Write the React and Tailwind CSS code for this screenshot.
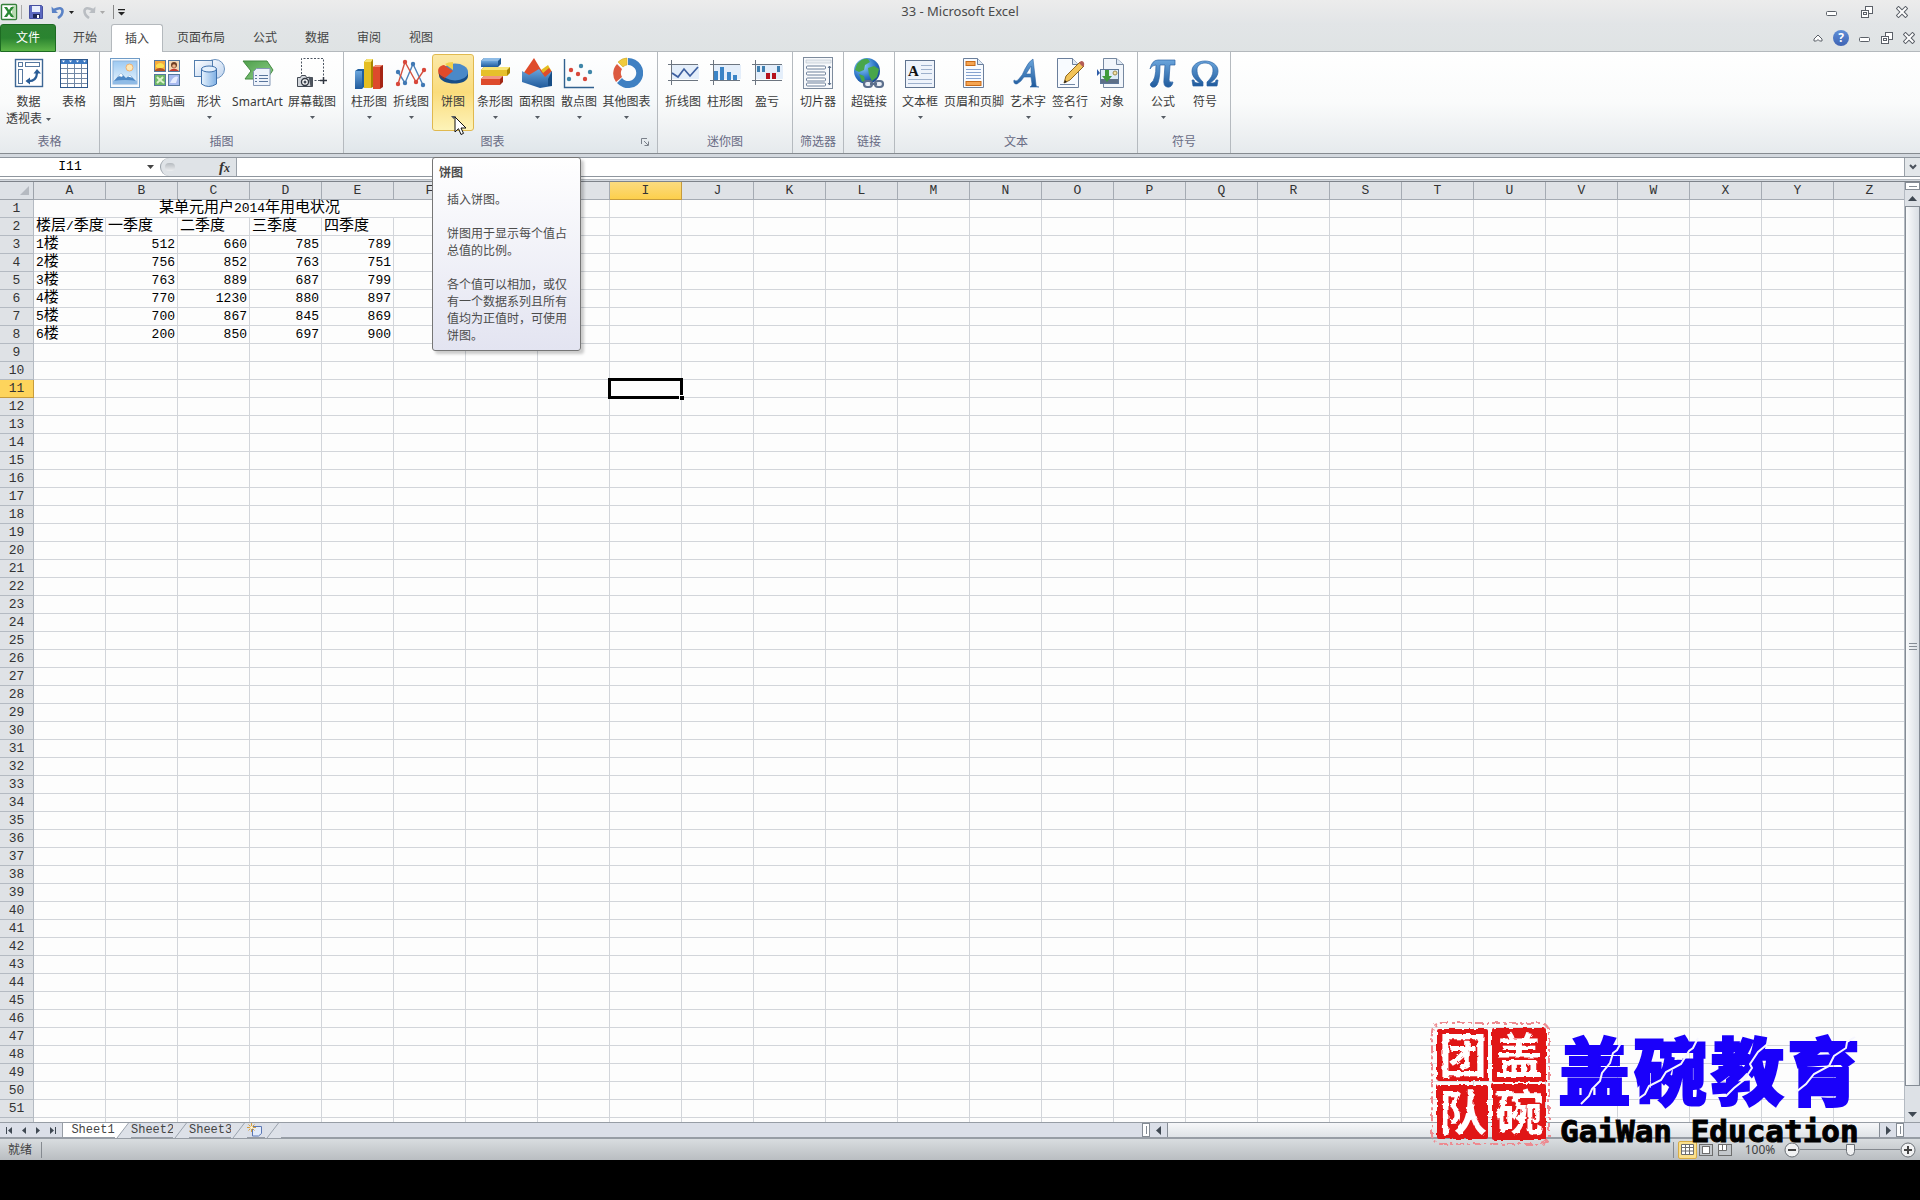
import React from "react";

const UI = "font-['Noto_Sans','Noto_Sans_CJK_SC',sans-serif]";
const MONO = "font-['Liberation_Mono','Noto_Sans_CJK_SC',monospace]";

const Svg = ({ children, className = "size-8" }) => (
  <svg viewBox="0 0 32 32" className={className} fill="none" aria-hidden="true">
    {children}
  </svg>
);

const Defs = () => (
  <svg className="absolute size-0" aria-hidden="true">
    <defs>
      <linearGradient id="blue" x1="0" y1="0" x2="0" y2="1">
        <stop offset="0" stopColor="#6aa5dc" />
        <stop offset="1" stopColor="#1f5a9c" />
      </linearGradient>
      <linearGradient id="pale" x1="0" y1="0" x2="1" y2="1">
        <stop offset="0" stopColor="#ffffff" />
        <stop offset="1" stopColor="#bcd2ee" />
      </linearGradient>
      <linearGradient id="sky" x1="0" y1="0" x2="0" y2="1">
        <stop offset="0" stopColor="#9cc9f2" />
        <stop offset="1" stopColor="#eaf5fd" />
      </linearGradient>
      <linearGradient id="can" x1="0" y1="0" x2="1" y2="0">
        <stop offset="0" stopColor="#e6f2fd" />
        <stop offset="1" stopColor="#7fb0e4" />
      </linearGradient>
      <linearGradient id="green" x1="0" y1="0" x2="1" y2="1">
        <stop offset="0" stopColor="#4f9f4c" />
        <stop offset="1" stopColor="#8ccf86" />
      </linearGradient>
      <radialGradient id="globe" cx="0.35" cy="0.3" r="0.8">
        <stop offset="0" stopColor="#8fd0fb" />
        <stop offset="0.6" stopColor="#2a72c4" />
        <stop offset="1" stopColor="#143f84" />
      </radialGradient>
    </defs>
  </svg>
);

const icons = {
  pivot: (
    <Svg>
      <rect x="2.5" y="2.5" width="27" height="27" fill="#fff" stroke="#3d6795" strokeWidth="1.4" />
      <rect x="5.500" y="5.500" width="4" height="4" stroke="#56789f" />
      <rect x="12.500" y="5.500" width="14" height="4" stroke="#56789f" />
      <rect x="5.500" y="12.500" width="4" height="14" stroke="#56789f" />
      <path d="M14 24c7 1 10-3 10-9" stroke="#2b5d96" strokeWidth="2.200" />
      <path d="M20.500 16.500L24 12l4 4.500z M17 20.500L12.500 24l4.500 3.500z" fill="#2b5d96" />
    </Svg>
  ),
  table: (
    <Svg>
      <rect x="2" y="2" width="28" height="29" fill="#fff" />
      <rect x="2" y="2" width="28" height="5" fill="#3c79c2" />
      <path d="M4 3.500h3l-1.500 2zM11 3.500h3l-1.500 2zM18 3.500h3l-1.500 2zM25 3.500h3l-1.500 2z" fill="#fff" />
      <path d="M2.500 11.500h27M2.500 16.500h27M2.500 21.500h27M2.500 26.500h27M9.500 7v24M16.500 7v24M23.500 7v24" stroke="#7188a5" />
      <rect x="2.500" y="2.500" width="27" height="28" stroke="#2d568a" />
    </Svg>
  ),
  picture: (
    <Svg>
      <rect x="1.500" y="1.500" width="29" height="29" fill="#f6fbff" stroke="#6f9bc6" />
      <rect x="4" y="4" width="24" height="23" fill="url(#sky)" stroke="#8fb4da" />
      <circle cx="20.500" cy="10.500" r="3.500" fill="#fde9b8" stroke="#f0b070" />
      <path d="M4 25l8-9 5 5 4-3 7 7v2H4z" fill="#4c87c5" />
      <path d="M12 16l-3 4 2-1 1 1 2-1zM21 18l-2 2 2 0 2 1z" fill="#fff" />
      <path d="M4 24q12-2 24 0v3H4z" fill="#8fbbe6" />
    </Svg>
  ),
  clipart: (
    <Svg>
      <rect x="3.500" y="3.500" width="11" height="11" fill="#f7a93b" stroke="#55779e" />
      <path d="M5 8q5-4 8 0v2q-4 3-8 0z" fill="#fce052" />
      <path d="M4 13q5-4 10 0v1H4z" fill="#b34f22" />
      <rect x="17.500" y="3.500" width="11" height="11" fill="#f3d9b6" stroke="#55779e" />
      <circle cx="23" cy="8" r="3" fill="#6d3d22" />
      <circle cx="23" cy="9" r="1.800" fill="#f1b587" />
      <path d="M18 14q5-5 10 0z" fill="#c5392e" />
      <rect x="3.500" y="17.500" width="11" height="11" fill="#6fb868" stroke="#55779e" />
      <path d="M6 20l3 3 3-3M6 26l3-3 4 3" stroke="#dcf3c9" strokeWidth="2" />
      <rect x="17.500" y="17.500" width="11" height="11" fill="#a7b9ef" stroke="#55779e" />
      <path d="M19 26q4-8 8-6l-2 6z" fill="#e7edff" />
    </Svg>
  ),
  shapes: (
    <Svg>
      <circle cx="22" cy="12" r="9.500" fill="url(#pale)" stroke="#6c93bf" />
      <rect x="1.500" y="3.500" width="18" height="16" fill="url(#pale)" stroke="#557fae" />
      <path d="M8.500 12v15q7 5 15 0V12z" fill="url(#can)" stroke="#3e70ab" />
      <ellipse cx="16" cy="12" rx="7.500" ry="3" fill="#e4f0fc" stroke="#3e70ab" />
    </Svg>
  ),
  smartart: (
    <Svg>
      <path d="M1 4h24l6 9-6 9H3l6-8z" fill="url(#green)" stroke="#438a40" />
      <path d="M11.500 14.500l3-3h13.500v17H11.500z" fill="#eef3fb" stroke="#8497b5" />
      <path d="M13 18.500h2M17 18.500h9M13 21.500h2M17 21.500h9M13 24.500h2M17 24.500h9" stroke="#59759c" />
    </Svg>
  ),
  screenshot: (
    <Svg>
      <path d="M5.500 17V1.500h22V23.500H18" stroke="#4c5561" strokeDasharray="2 1.500" />
      <path d="M24 23.500h7M27.500 20v7" stroke="#303640" strokeWidth="1.500" />
      <path d="M1.500 20.500h3l1-2h4l1 2h6v9h-15z" fill="#d3d7dc" stroke="#444b55" />
      <circle cx="9" cy="25" r="3.500" fill="#fff" stroke="#333a44" strokeWidth="1.400" />
      <circle cx="9" cy="25" r="1.500" fill="#454c58" />
      <path d="M12.500 19.500l4 1v9l-2 0z" fill="#4d545e" />
    </Svg>
  ),
  column: (
    <Svg>
      <path d="M2 14l3-2h6v18l-2 2H2z" fill="#1f5f9f" />
      <path d="M2 14h7v18H2z" fill="url(#blue)" />
      <path d="M11 5l3-3h6v28l-2 1h-7z" fill="#a58500" />
      <path d="M11 5h7v26h-7z" fill="#e5be22" />
      <path d="M11 5l3-3h6l-2 3z" fill="#f8e36f" />
      <path d="M20 10l3-2h7v22l-3 2h-7z" fill="#a52414" />
      <path d="M20 10h7v22h-7z" fill="#dd4a2c" />
      <path d="M20 10l3-2h7l-3 2z" fill="#f19078" />
    </Svg>
  ),
  line: (
    <Svg>
      <path d="M3 15l7 11 8-19 10 21" stroke="#4c81b8" strokeWidth="1.400" />
      <path d="M3 27l7-22 11 20 8-12" stroke="#d4513f" strokeWidth="1.400" />
      {[[3, 27], [10, 5], [21, 25], [29, 13]].map(([x, y]) => (
        <circle key={`${x}-${y}`} cx={x} cy={y} r="2.200" fill="#d8473a" />
      ))}
      {[[3, 15], [10, 26], [18, 7], [28, 28]].map(([x, y]) => (
        <circle key={`${x}-${y}`} cx={x} cy={y} r="2.200" fill="#3f78b4" />
      ))}
    </Svg>
  ),
  pie: (
    <Svg>
      <path d="M2 15v4c2 10 29 10 29 0v-4z" fill="#174d86" />
      <ellipse cx="18" cy="15" rx="13" ry="8.500" fill="#4a89c8" />
      <path d="M16 14L8 21C-2 17 0 9 7 8z" fill="#e04a2a" />
      <path d="M1 14c0 4 3 7 7 8v-1c-4-1-6-3-7-7z" fill="#a12a14" />
      <path d="M16 13L8 7q3-2 8-2z" fill="#f2d04a" />
    </Svg>
  ),
  bar: (
    <Svg>
      <path d="M2 4l3-3h17v6l-3 3H2z" fill="#1f5790" />
      <path d="M2 4h17v6H2z" fill="url(#blue)" />
      <path d="M2 4l3-3h17l-3 3z" fill="#8dbbe6" />
      <path d="M2 13l3-3h26v6l-3 3H2z" fill="#a88500" />
      <path d="M2 13h26v6H2z" fill="#e6c02b" />
      <path d="M2 13l3-3h26l-3 3z" fill="#f8e578" />
      <path d="M2 22l3-3h19v6l-3 3H2z" fill="#a22815" />
      <path d="M2 22h19v6H2z" fill="#de4b2c" />
      <path d="M2 22l3-3h19l-3 3z" fill="#f29780" />
    </Svg>
  ),
  area: (
    <Svg>
      <path d="M20 13l7-5 4 7v11l-8-2z" fill="#e5bd20" />
      <path d="M2 17L13 1l9 15 6-5 3 4v12H10z" fill="#df4c2c" />
      <path d="M1 14l7 4 10-6 6 8 7-6v15l-12 2L1 25z" fill="url(#blue)" />
      <path d="M27 22l4-8v15l-4 0z" fill="#174d86" />
    </Svg>
  ),
  scatter: (
    <Svg>
      <path d="M1.500 2v28.500H31" stroke="#31618f" strokeWidth="1.400" />
      {[[8, 13], [15, 17], [22, 22]].map(([x, y]) => (
        <circle key={x} cx={x} cy={y} r="2.200" fill="#d8473a" />
      ))}
      {[[18, 9], [6, 22], [27, 15]].map(([x, y]) => (
        <circle key={x} cx={x} cy={y} r="2.200" fill="#3f86a8" />
      ))}
    </Svg>
  ),
  donut: (
    <Svg>
      <path d="M17 1a15 15 0 1 1-11 25l5-5a8 8 0 1 0 6-13z" fill="#3f80c2" />
      <path d="M5 25a14 14 0 0 1 1-18l5 5a8 8 0 0 0 0 8z" fill="#dc5a40" />
      <path d="M7 5q4-4 9-4v7q-2 0-4 2z" fill="#f0cb3c" stroke="#c79d1b" strokeWidth="0.500" />
    </Svg>
  ),
  sparkLine: (
    <Svg>
      <path d="M4 8h28v14H4z" fill="#e4eefa" />
      <path d="M1 7.500h30M1 23.500h30M4.500 3v25" stroke="#6c7580" />
      <path d="M5 16l6 4 6-8 6 7 8-9" stroke="#3d5fa0" strokeWidth="1.700" />
    </Svg>
  ),
  sparkColumn: (
    <Svg>
      <path d="M4 8h28v14H4z" fill="#e4eefa" />
      <path d="M1 7.500h30M1 23.500h30M4.500 3v25" stroke="#6c7580" />
      <path d="M5 14h4v9H5zM11 10h4v13h-4zM18 15h4v8h-4zM24 18h4v5h-4z" fill="#3b84c6" />
    </Svg>
  ),
  winLoss: (
    <Svg>
      <path d="M4 8h28v14H4z" fill="#e4eefa" />
      <path d="M1 7.500h30M1 23.500h30M4.500 3v25" stroke="#6c7580" />
      <path d="M6 9h3v6H6zM11 9h3v6h-3zM26 9h3v6h-3z" fill="#3f7fb0" />
      <path d="M15 16h4v6h-4zM21 16h4v6h-4z" fill="#b5121d" />
    </Svg>
  ),
  slicer: (
    <Svg>
      <rect x="1.500" y="0.500" width="29" height="31" fill="#f7f9fc" stroke="#7d8b9d" />
      <path d="M4 3h25v3H4z" fill="#eceff3" stroke="#aab4c0" strokeWidth="0.500" />
      {[9, 15, 21, 26].map((y) => (
        <rect key={y} x="4.500" y={y} width="19" height="3" rx="1" fill="#fff" stroke="#6d809b" />
      ))}
      <path d="M27.500 9v19M26 11l1.500-2 1.500 2M26 26l1.500 2 1.500-2" stroke="#596d88" />
    </Svg>
  ),
  link: (
    <Svg>
      <circle cx="14" cy="14" r="13" fill="url(#globe)" />
      <path d="M4 7q5-6 11-5l2 3-5 3-1 5-5 2-4-2zM15 11l6-2 5 3-2 8-5 4-3-6zM6 17l5 2 1 5-3 1z" fill="#48a64a" />
      <g stroke="#5c6f8c" strokeWidth="2.200" fill="none">
        <rect x="11" y="24" width="8" height="6" rx="3" fill="#e8edf5" />
        <rect x="22" y="24" width="8" height="6" rx="3" fill="#e8edf5" />
        <path d="M17 27h7" />
      </g>
    </Svg>
  ),
  textbox: (
    <Svg>
      <rect x="1.500" y="3.500" width="29" height="27" fill="#eef3fb" stroke="#60738f" />
      <text x="4" y="19" fontSize="15" fontFamily="Liberation Serif" fontWeight="bold" fill="#111">A</text>
      <path d="M17 8.500h11M17 12.500h11M17 16.500h11M4 22.500h24M4 26.500h24" stroke="#9db0cc" />
    </Svg>
  ),
  header: (
    <Svg>
      <path d="M5.500 1.500h14l6 6v23h-20z" fill="#f8fbff" stroke="#6b7f9c" />
      <path d="M19.500 1.500v6h6" fill="#dfe9f5" stroke="#6b7f9c" />
      <rect x="8" y="4.500" width="9" height="4" fill="#f5a552" stroke="#c76a18" />
      <rect x="8" y="24.500" width="15" height="4" fill="#f5a552" stroke="#c76a18" />
      <path d="M8 12.500h15M8 15.500h15M8 18.500h15M8 21.500h15" stroke="#86a3cf" />
    </Svg>
  ),
  wordart: (
    <Svg>
      <path d="M21 2l3 26q0 2 3 2h-9q2-1 2-3l-1-7h-7q-3 5-7 7-4 0-3-4 2 2 4 0 5-5 7-11 4-8 8-10zM19 9l-5 8h5z" fill="url(#blue)" stroke="#2e64a5" strokeWidth="0.600" />
    </Svg>
  ),
  signature: (
    <Svg>
      <path d="M3.500 1.500h15l6 6v23h-21z" fill="#f8fbff" stroke="#6b7f9c" />
      <path d="M18.500 1.500v6h6" fill="#dfe9f5" stroke="#6b7f9c" />
      <path d="M6 27.500h15" stroke="#7187a5" />
      <path d="M10 26l2-7L26 5l4 4-14 14z" fill="#f2c45a" stroke="#8c6620" />
      <path d="M25 6l2-2q4 0 3 5l-1 1z" fill="#b45d56" />
      <path d="M10 26l1-3 2 2z" fill="#222" />
    </Svg>
  ),
  object: (
    <Svg>
      <path d="M7.500 1.500h13l7 6v23h-20z" fill="#f2f6fb" stroke="#7688a0" />
      <path d="M20.500 1.500v6h7" fill="#dfe9f5" stroke="#7688a0" />
      <rect x="4.500" y="12.500" width="18" height="14" fill="#dcebf8" stroke="#5d7698" />
      <path d="M5 22h17v4H5z" fill="#5d6f87" />
      <path d="M9 13h4v6h3l-5 6-5-6h3z" fill="#3e9b3d" />
      <circle cx="19" cy="16" r="2" fill="#f4e2a6" stroke="#9a8a50" />
      <path d="M1 12l3 4-3 3z" fill="#2d5ca8" />
    </Svg>
  ),
  pi: (
    <Svg>
      <path d="M3 12Q5 3 11 3h17v5h-5l-1 15q0 3 4 2-1 6-6 5-4-1-3-8l1-14h-5q0 15-3 20-2 3-5 2-3-2-1-4 5-3 5-18-4 0-6 4z" fill="url(#blue)" stroke="#2b63a5" strokeWidth="0.700" />
    </Svg>
  ),
  omega: (
    <Svg>
      <path d="M3 23h2q0 3 3 3h3C5 22 3 18 3 14 3 8 9 4 16 4s13 4 13 10c0 4-2 8-8 12h3q3 0 3-3h2l-1 6H18v-4c4-4 6-7 6-12 0-4-3-7-8-7s-8 3-8 7c0 5 2 8 6 12v4H4z" fill="url(#blue)" stroke="#2b63a5" strokeWidth="0.700" />
    </Svg>
  ),
};

const GROUPS = [
  {
    name: "表格",
    items: [
      { icon: "pivot", label: "数据", second: "透视表", w: "w-[49px]" },
      { icon: "table", label: "表格" },
    ],
  },
  {
    name: "插图",
    items: [
      { icon: "picture", label: "图片" },
      { icon: "clipart", label: "剪贴画" },
      { icon: "shapes", label: "形状", drop: true },
      { icon: "smartart", label: "SmartArt", w: "w-[55px]" },
      { icon: "screenshot", label: "屏幕截图", drop: true, w: "w-[54px]" },
    ],
  },
  {
    name: "图表",
    tinted: true,
    items: [
      { icon: "column", label: "柱形图", drop: true },
      { icon: "line", label: "折线图", drop: true },
      { icon: "pie", label: "饼图", drop: true, active: true },
      { icon: "bar", label: "条形图", drop: true },
      { icon: "area", label: "面积图", drop: true },
      { icon: "scatter", label: "散点图", drop: true },
      { icon: "donut", label: "其他图表", drop: true, w: "w-[53px]" },
    ],
  },
  {
    name: "迷你图",
    items: [
      { icon: "sparkLine", label: "折线图" },
      { icon: "sparkColumn", label: "柱形图" },
      { icon: "winLoss", label: "盈亏" },
    ],
  },
  { name: "筛选器", items: [{ icon: "slicer", label: "切片器" }] },
  { name: "链接", items: [{ icon: "link", label: "超链接" }] },
  {
    name: "文本",
    items: [
      { icon: "textbox", label: "文本框", drop: true },
      { icon: "header", label: "页眉和页脚", w: "w-[66px]" },
      { icon: "wordart", label: "艺术字", drop: true },
      { icon: "signature", label: "签名行", drop: true },
      { icon: "object", label: "对象" },
    ],
  },
  {
    name: "符号",
    items: [
      { icon: "pi", label: "公式", drop: true },
      { icon: "omega", label: "符号" },
    ],
  },
];

const Down = ({ className = "text-[#555b63]" }) => (
  <svg viewBox="0 0 5 3" width="5" height="3" className={className} aria-hidden="true">
    <path d="M0 0h5L2.500 3z" fill="currentColor" />
  </svg>
);

const Tooltip = () => (
  <div
    role="tooltip"
    className="absolute top-[103px] left-0 z-20 w-[149px] rounded-[3px] border border-[#767676] bg-linear-to-b from-white to-[#e3e4f1] py-1.5 text-left text-xs leading-[17px] text-[#4c4c4c] shadow-[3px_3px_3px_rgba(0,0,0,0.2)]"
  >
    <p className="px-1.5 font-bold">饼图</p>
    <div className="pt-2.5 pl-3.5">
      <p>插入饼图。</p>
      <p className="pt-[17px]">饼图用于显示每个值占<br />总值的比例。</p>
      <p className="pt-[17px]">各个值可以相加，或仅<br />有一个数据系列且所有<br />值均为正值时，可使用<br />饼图。</p>
    </div>
  </div>
);

const Cursor = () => (
  <svg viewBox="0 0 13 20" width="13" height="20" className="absolute top-[62px] left-[22px] z-30" aria-hidden="true">
    <path d="M1 1v15l3.500-3.300L7 18.500l2.500-1.100L7 12h5z" fill="#fff" stroke="#111" />
  </svg>
);

const RibbonButton = ({ item }) => (
  <div className={`relative ${item.w || "w-[42px]"}`}>
    <button
      type="button"
      className={`flex h-[77px] w-full flex-col items-center rounded-[3px] border pt-0.5 ${
        item.active
          ? "border-[#e0b94f] bg-linear-to-b from-[#fbe8a6] via-[#fadc7c] to-[#fdf3b8]"
          : "border-transparent"
      }`}
    >
      {icons[item.icon]}
      <span className="mt-[5px] leading-4 whitespace-nowrap">{item.label}</span>
      {item.second && (
        <span className="mt-px flex items-center gap-1 leading-4 whitespace-nowrap">
          {item.second}
          <Down />
        </span>
      )}
      {item.drop && <Down className="mt-1.5 text-[#555b63]" />}
    </button>
    {item.active && <Tooltip />}
    {item.active && <Cursor />}
  </div>
);

const Ribbon = () => (
  <div className="flex h-[103px] border-t border-b border-t-[#b4b9bd] border-b-[#868b90] bg-linear-to-b from-white via-[#fafbfb] to-[#e6eaed] text-xs text-[#3b3b3b]">
    {GROUPS.map((g) => (
      <section
        key={g.name}
        aria-label={g.name}
        className={`flex flex-col border-r border-[#b5babf] px-1 pt-0.5 ${
          g.tinted ? "bg-linear-to-b from-white via-[#f5f8fa] to-[#e0e6ea]" : ""
        }`}
      >
        <div className="flex">
          {g.items.map((it) => (
            <RibbonButton key={it.label} item={it} />
          ))}
        </div>
        <div className="flex h-6 items-center text-[#686b84]">
          <span className="flex-1 text-center whitespace-nowrap">{g.name}</span>
          {g.tinted && (
            <button type="button" aria-label="图表设置" className="flex w-4 justify-end pr-1 text-[#7a818a]">
              <svg viewBox="0 0 8 8" width="8" height="8" fill="none" stroke="currentColor">
                <path d="M.5 6V.5H6M3 3l4 4M7.500 3.500v4h-4" />
              </svg>
            </button>
          )}
        </div>
      </section>
    ))}
  </div>
);

const MinGlyph = () => (
  <svg viewBox="0 0 12 12" width="12" height="12" fill="#fff" stroke="#5b6068" aria-hidden="true">
    <rect x=".5" y="5.500" width="10" height="4" rx="1" />
  </svg>
);
const RestoreGlyph = () => (
  <svg viewBox="0 0 12 12" width="12" height="12" fill="#fff" stroke="#5b6068" aria-hidden="true">
    <rect x="4.500" y=".5" width="7" height="7" />
    <rect x=".5" y="4.500" width="7" height="7" />
    <rect x="2.500" y="6.500" width="3" height="2" />
  </svg>
);
const CloseGlyph = () => (
  <svg viewBox="0 0 12 12" width="12" height="12" aria-hidden="true">
    <path d="M2.500 2.500l7 7M9.500 2.500l-7 7" stroke="#5b6068" strokeWidth="4" strokeLinecap="square" />
    <path d="M2.500 2.500l7 7M9.500 2.500l-7 7" stroke="#fff" strokeWidth="2" strokeLinecap="square" />
  </svg>
);

const TitleBar = () => (
  <header className="grid h-6 grid-cols-[1fr_auto_1fr] items-center bg-linear-to-b from-[#ececec] to-[#e2e5e7] text-[13px] text-[#4a4a4a]">
    <div className="flex items-center">
      <svg viewBox="0 0 18 18" width="18" height="18" aria-label="Excel">
        <rect x="1.500" y="1.500" width="15" height="15" rx="1" fill="#fff" stroke="#35803a" strokeWidth="1.400" />
        <path d="M12 3h4v12h-4z" fill="#b8dbb3" />
        <path d="M4 4h3l2 3 2-3h3l-3.500 5 3.500 5h-3l-2-3-2 3H4l3.500-5z" fill="#2c8a36" />
      </svg>
      <span className="ml-[3px] h-3.5 w-px bg-[#aaa]" />
      <button type="button" aria-label="保存" className="ml-[7px]">
        <svg viewBox="0 0 14 14" width="14" height="14">
          <path d="M.5.500h12l1 1v12H.5z" fill="#5c69c0" stroke="#4650a0" />
          <path d="M3 1h8v6H3z" fill="#e9effc" />
          <path d="M4 9h7v4H4z" fill="#1f2858" />
          <path d="M8 10h2v3H8z" fill="#fff" />
        </svg>
      </button>
      <button type="button" aria-label="撤消" className="ml-2">
        <svg viewBox="0 0 14 14" width="14" height="14" fill="none">
          <path d="M3 5q8-4 8.500 1 .2 4-4.500 7" stroke="#5a82c6" strokeWidth="2.600" />
          <path d="M.5 1.500L1 8h6z" fill="#5a82c6" />
        </svg>
      </button>
      <Down className="ml-1 text-[#222]" />
      <button type="button" aria-label="恢复" className="ml-2">
        <svg viewBox="0 0 14 14" width="14" height="14" fill="none">
          <path d="M11 5Q3 1 2.500 6q-.2 4 4.500 7" stroke="#b9bdc2" strokeWidth="2.600" />
          <path d="M13.500 1.500L13 8H7z" fill="#b9bdc2" />
        </svg>
      </button>
      <Down className="ml-1 text-[#aaa]" />
      <span className="ml-2 h-3.5 w-px bg-[#888]" />
      <button type="button" aria-label="自定义快速访问工具栏" className="ml-1">
        <svg viewBox="0 0 7 7" width="7" height="7">
          <path d="M0 0h7v1.200H0zM0 3h7L3.500 6.500z" fill="#222" />
        </svg>
      </button>
    </div>
    <h1>33 - Microsoft Excel</h1>
    <div className="flex justify-end gap-[23px] pr-3">
      <button type="button" aria-label="最小化"><MinGlyph /></button>
      <button type="button" aria-label="还原"><RestoreGlyph /></button>
      <button type="button" aria-label="关闭"><CloseGlyph /></button>
    </div>
  </header>
);

const TABS = ["开始", "插入", "页面布局", "公式", "数据", "审阅", "视图"];

const TabBar = () => (
  <nav className="relative z-10 -mb-px flex h-7 bg-linear-to-b from-[#e2e5e7] to-[#dfe3e4] text-xs text-[#444]">
    <button
      type="button"
      className="mr-[3px] w-14 rounded-t-[3px] border border-[#1d6b23] bg-linear-to-b from-[#2d8232] via-[#2a8430] to-[#5cb548] text-white"
    >
      文件
    </button>
    {TABS.map((t) => (
      <button
        key={t}
        type="button"
        className={
          t === "插入"
            ? "rounded-t-[3px] border border-b-0 border-[#b4b9bd] bg-white px-[13px]"
            : "border-b border-[#b4b9bd] px-3.5"
        }
      >
        {t}
      </button>
    ))}
    <div className="flex flex-1 items-center justify-end gap-2.5 border-b border-[#b4b9bd] pr-[5px]">
      <button type="button" aria-label="功能区最小化">
        <svg viewBox="0 0 10 8" width="10" height="8" fill="#fff" stroke="#5b6068">
          <path d="M1 5l4-4 4 4v2H6.500L5 5.500 3.500 7H1z" />
        </svg>
      </button>
      <button
        type="button"
        aria-label="帮助"
        className="size-4 rounded-full bg-linear-to-b from-[#5f8fd8] to-[#3f63b3] text-xs leading-4 font-bold text-white"
      >
        ?
      </button>
      <button type="button" aria-label="最小化窗口"><MinGlyph /></button>
      <button type="button" aria-label="还原窗口"><RestoreGlyph /></button>
      <button type="button" aria-label="关闭窗口"><CloseGlyph /></button>
    </div>
  </nav>
);

const FormulaBar = () => (
  <div className="border-b border-[#7e838a] bg-[#d3d8de] pt-[3px]">
    <div className="flex h-5 border-y border-[#8f969e] bg-white">
      <input
        aria-label="名称框"
        defaultValue="I11"
        className={`w-[140px] bg-white text-center text-[13px] text-black outline-none ${MONO}`}
      />
      <button type="button" aria-label="名称列表" className="flex w-5 items-center justify-center text-[#444]">
        <svg viewBox="0 0 7 4" width="7" height="4"><path d="M0 0h7L3.500 4z" fill="currentColor" /></svg>
      </button>
      <div className="flex w-[77px] items-center justify-between rounded-l-full border-r border-l border-[#9aa1a9] bg-[#dfe3e7] pr-1.5 pl-1">
        <span className="h-2 w-2.5 rounded-full bg-linear-to-b from-[#b6bbc0] to-[#eceef0]" />
        <button type="button" aria-label="插入函数" className="font-['Liberation_Serif',serif] text-[15px] leading-4 font-bold text-[#333] italic">
          f<span className="text-xs">x</span>
        </button>
      </div>
      <input aria-label="编辑栏" className="min-w-0 flex-1 bg-white outline-none" />
      <button type="button" aria-label="展开编辑栏" className="flex w-4 items-center justify-center border-l border-[#9aa1a9] bg-[#e3e7ea]">
        <svg viewBox="0 0 8 6" width="8" height="6" fill="none" stroke="#4b525c" strokeWidth="2"><path d="M1 1l3 3 3-3" /></svg>
      </button>
    </div>
    <div className="mb-px h-[3px] border-b border-[#b5bac0] bg-white" />
  </div>
);

const COLS = "ABCDEFGHIJKLMNOPQRSTUVWXYZ".split("");
const ROWS = Array.from({ length: 52 }, (_, i) => i + 1);
const LAST_LABELLED_ROW = 51;
const DATA = {
  2: ["楼层/季度", "一季度", "二季度", "三季度", "四季度"],
  3: ["1楼", 512, 660, 785, 789],
  4: ["2楼", 756, 852, 763, 751],
  5: ["3楼", 763, 889, 687, 799],
  6: ["4楼", 770, 1230, 880, 897],
  7: ["5楼", 700, 867, 845, 869],
  8: ["6楼", 200, 850, 697, 900],
};

// Chinese runs are set two pixels larger than the monospaced latin text beside them.
const Mixed = ({ text }) =>
  text.split(/([\u4e00-\u9fff]+)/).map((run, i) =>
    i % 2 ? (
      <span key={i} className="text-[15px] leading-4">
        {run}
      </span>
    ) : (
      run
    )
  );

const Cell = ({ row, col }) => {
  const value = DATA[row]?.[col];
  const selected = row === 11 && col === 8;
  return (
    <td
      className={`border-r border-b border-[#d2d5da] p-0 whitespace-nowrap ${selected ? "relative" : ""} ${
        typeof value === "number" ? "pr-0.5 text-right" : "pl-0.5"
      }`}
    >
      {typeof value === "string" ? <Mixed text={value} /> : value}
      {selected && (
        <span className="absolute -inset-0.5 border-3 border-black">
          <span className="absolute -right-1 -bottom-1 size-[5px] border-t border-l border-white bg-black" />
        </span>
      )}
    </td>
  );
};

const Grid = () => (
  <div className="min-w-0 flex-1 overflow-hidden bg-[#fdfdfd]">
    <table className={`w-[1906px] table-fixed border-separate border-spacing-0 text-[13px] leading-4 text-black ${MONO}`}>
      <colgroup>
        <col className="w-[34px]" />
        {COLS.map((c) => (
          <col key={c} className="w-[72px]" />
        ))}
      </colgroup>
      <thead>
        <tr className="h-[18px]">
          <th aria-label="全选" className="border-r border-b border-[#9da3ab] bg-[#dde1e6] p-0">
            <svg viewBox="0 0 9 9" width="9" height="9" className="mr-1 ml-auto"><path d="M9 0v9H0z" fill="#b5bac1" /></svg>
          </th>
          {COLS.map((c) => (
            <th
              key={c}
              scope="col"
              className={`border-r border-b p-0 font-normal ${
                c === "I"
                  ? "border-[#c69b3c] bg-linear-to-b from-[#fbdb7e] to-[#fdcf4a] text-[#333]"
                  : "border-[#a5abb3] bg-[#dfe2e6] text-[#333]"
              }`}
            >
              {c}
            </th>
          ))}
        </tr>
      </thead>
      <tbody>
        {ROWS.map((r) => (
          <tr key={r} className="h-[18px]">
            <th
              scope="row"
              className={`border-r border-b p-0 font-normal text-[#333] ${
                r === 11 ? "border-[#c69b3c] bg-[#fdd45c]" : "border-[#b4bac2] bg-[#dfe2e6]"
              }`}
            >
              {r <= LAST_LABELLED_ROW ? r : null}
            </th>
            {r === 1 ? (
              <td colSpan={6} className="border-r border-b border-[#d2d5da] p-0 text-center">
                <Mixed text="某单元用户2014年用电状况" />
              </td>
            ) : null}
            {(r === 1 ? COLS.slice(6) : COLS).map((c) => (
              <Cell key={c} row={r} col={COLS.indexOf(c)} />
            ))}
          </tr>
        ))}
      </tbody>
    </table>
  </div>
);

const Triangle = ({ d, label }) => (
  <button type="button" aria-label={label} className="flex h-4 items-center justify-center">
    <svg viewBox="0 0 9 9" width="9" height="9"><path d={d} fill="#3f4852" /></svg>
  </button>
);

const VScroll = () => (
  <div className="flex w-4 shrink-0 flex-col border-l border-[#b4bac2] bg-[#dde1e6]">
    <div className="flex h-2 shrink-0 items-center justify-center border border-[#858c95] bg-white">
      <span className="h-px w-2 bg-[#858c95]" />
    </div>
    <Triangle label="向上滚动" d="M0 7h9L4.500 2z" />
    <div className="flex h-[880px] min-h-0 shrink flex-col items-center justify-center gap-0.5 border border-[#858c95] bg-linear-to-r from-[#fafbfc] to-[#d9dee4]">
      <span className="h-px w-2 bg-[#858c95]" />
      <span className="h-px w-2 bg-[#858c95]" />
      <span className="h-px w-2 bg-[#858c95]" />
    </div>
    <div className="flex-1" />
    <Triangle label="向下滚动" d="M0 2h9L4.500 7z" />
  </div>
);

const Slash = ({ left = "#dde1e8", right = "#dde1e8" }) => (
  <svg viewBox="0 0 16 15" width="16" height="15" className="shrink-0" aria-hidden="true">
    <path d="M0 0h14L2 15H0z" fill={left} />
    <path d="M14 0h2v15H2z" fill={right} />
    <path d="M13.500 0L2 15" stroke="#9aa2ad" />
  </svg>
);

const SheetBar = () => (
  <div className="flex h-[17px] border-t border-b-2 border-[#979da5] bg-[#dbdfe8]">
    <div className="flex w-[63px] items-center justify-around border-r border-[#979da5] px-0.5">
      <Triangle label="第一张" d="M1 1h1v7H1zM7 1v7L3 4.500z" />
      <Triangle label="上一张" d="M7 1v7L3 4.500z" />
      <Triangle label="下一张" d="M2 1v7l4-3.500z" />
      <Triangle label="最后一张" d="M2 1v7l4-3.500zM7 1h1v7H7z" />
    </div>
    <div className={`flex text-xs leading-[15px] text-[#444] ${MONO}`}>
      <button type="button" className="w-[52px] bg-white pl-2">Sheet1</button>
      <Slash left="#fff" />
      <button type="button" className="w-[42px]">Sheet2</button>
      <Slash />
      <button type="button" className="w-[42px]">Sheet3</button>
      <Slash />
      <button type="button" aria-label="插入工作表" className="pr-0.5">
        <svg viewBox="0 0 16 14" width="16" height="14" fill="none">
          <path d="M5.500 3.500h9v7l-3 2.500h-6z" fill="#e3ecfb" stroke="#5c78b4" />
          <path d="M4.500 0v9M0 4.500h9M1.500 1.500l6 6M7.500 1.500l-6 6" stroke="#d9a13c" />
          <circle cx="4.500" cy="4.500" r="1.500" fill="#fff6d5" />
        </svg>
      </button>
      <Slash />
    </div>
    <div className="flex-1" />
    <div className="flex w-[762px]">
      <div className="flex w-2 items-center justify-center border border-[#858c95] bg-white"><span className="h-2 w-px bg-[#858c95]" /></div>
      <div className="flex w-[17px] items-center justify-center"><Triangle label="向左滚动" d="M7 0v9L2 4.500z" /></div>
      <div className="flex-1 border-x border-[#858c95] bg-linear-to-b from-[#f6f7f9] to-[#dfe3e7]" />
      <div className="flex w-4 items-center justify-center"><Triangle label="向右滚动" d="M2 0v9l5-4.500z" /></div>
      <div className="flex w-2 items-center justify-center border border-[#858c95] bg-white"><span className="h-2 w-px bg-[#858c95]" /></div>
    </div>
    <div className="w-4" />
  </div>
);

const StatusBar = () => (
  <footer className="flex h-[21px] items-center bg-linear-to-b from-[#d9dde0] to-[#b9bdc1] pr-1 text-xs text-[#3f3f3f]">
    <span className="pl-2">就绪</span>
    <span className="ml-[9px] h-4 w-px bg-[#858a90]" />
    <div className="flex-1" />
    <span className="mr-1 h-4 w-px bg-[#858a90]" />
    <button type="button" aria-label="普通" className="flex h-[18px] w-[19px] items-center justify-center rounded-xs border border-[#d8ac45] bg-[#fbe08c]">
      <svg viewBox="0 0 13 11" width="13" height="11" fill="#fff" stroke="#6d6d6d">
        <path d="M.5.500h12v10H.5zM.5 3.500h12M.5 7h12M4.500.500v10M8.500.500v10" />
      </svg>
    </button>
    <button type="button" aria-label="页面布局视图" className="ml-0.5">
      <svg viewBox="0 0 14 12" width="14" height="12" fill="#c4c8cc" stroke="#6d6d6d">
        <rect x=".5" y=".5" width="13" height="11" />
        <rect x="3.500" y="2.500" width="7" height="7" fill="#fff" />
      </svg>
    </button>
    <button type="button" aria-label="分页预览" className="ml-[5px]">
      <svg viewBox="0 0 14 12" width="14" height="12" fill="#c4c8cc" stroke="#6d6d6d">
        <rect x=".5" y=".5" width="13" height="11" />
        <path d="M.5.500h8v6h-8zM4.500.500v6" fill="#fff" />
      </svg>
    </button>
    <button type="button" className="ml-3 w-8 text-center">100%</button>
    <button type="button" aria-label="缩小" className="ml-2">
      <svg viewBox="0 0 16 16" width="16" height="16"><circle cx="8" cy="8" r="7" fill="#f1f2f3" stroke="#6a6f75" /><path d="M4 7h8v2H4z" fill="#444" /></svg>
    </button>
    <label className="flex items-center">
      <span className="sr-only">显示比例</span>
      <input
        type="range"
        defaultValue="50"
        className="h-4 w-[100px] appearance-none bg-[linear-gradient(#84898f,#84898f)] bg-size-[100%_1px] bg-center bg-no-repeat [&::-webkit-slider-thumb]:h-3 [&::-webkit-slider-thumb]:w-[9px] [&::-webkit-slider-thumb]:appearance-none [&::-webkit-slider-thumb]:rounded-b-full [&::-webkit-slider-thumb]:border [&::-webkit-slider-thumb]:border-[#6a6f75] [&::-webkit-slider-thumb]:bg-[#f1f2f3]"
      />
    </label>
    <button type="button" aria-label="放大">
      <svg viewBox="0 0 16 16" width="16" height="16"><circle cx="8" cy="8" r="7" fill="#f1f2f3" stroke="#6a6f75" /><path d="M4 7h3V4h2v3h3v2H9v3H7V9H4z" fill="#444" /></svg>
    </button>
  </footer>
);

const Brand = () => (
  <svg viewBox="0 0 432 136" className="pointer-events-none absolute right-[60px] bottom-[48px] z-40 h-[136px] w-[432px]" aria-label="盖碗教育 GaiWan Education">
    <defs>
      <filter id="rough" x="-5%" y="-5%" width="110%" height="110%">
        <feTurbulence type="fractalNoise" baseFrequency="0.18" numOctaves="2" seed="4" result="n" />
        <feDisplacementMap in="SourceGraphic" in2="n" scale="4" />
      </filter>
    </defs>
    <g filter="url(#rough)" fontFamily="Noto Sans CJK SC" fontWeight="bold">
      <rect x="4" y="7" width="117" height="121" rx="9" fill="none" stroke="#ee8a90" strokeWidth="2" strokeDasharray="8 3 3 3" />
      <rect x="9" y="13" width="51" height="52" rx="2" fill="#e01218" />
      <rect x="64" y="12" width="54" height="54" rx="2" fill="#e01218" />
      <rect x="9" y="69" width="51" height="54" rx="2" fill="#e01218" />
      <rect x="64" y="68" width="54" height="56" rx="2" fill="#e01218" />
      <g fill="#fff" fontSize="48">
        <text x="11" y="57">团</text>
        <text x="67" y="57">盖</text>
        <text x="11" y="114">队</text>
        <text x="67" y="114">碗</text>
      </g>
    </g>
    <text
      x="130 206 283 359"
      y="83"
      fontSize="73"
      fontFamily="Noto Sans CJK SC"
      fontWeight="900"
      fill="#1a00fa"
      stroke="#1a00fa"
      strokeWidth="2"
    >
      盖碗教育
    </text>
    <g stroke="#f6f6ff" fill="none" strokeWidth="2">
      <path d="M194 25l-5 9-4 3-3 10-8 10-2 8-8 8-3 7-8 8" />
      <path d="M270 22l-5 10-4 3-8 13-15 8-5 8-12 6-4 8-7 5" />
      <path d="M342 26l-12 10-8 12 2 4-8 12-10 8-8 8-12 0" />
      <path d="M427 21l-8 5-1 6-12 8-5 10-15 8-8 10-10 8" />
    </g>
    <text x="132" y="126" fontSize="31" fontFamily="DejaVu Sans Mono" fontWeight="bold" fill="#000" stroke="#000">
      GaiWan Education
    </text>
  </svg>
);

export default function App() {
  return (
    <div className={`relative flex h-screen flex-col overflow-hidden bg-black ${UI}`}>
      <Defs />
      <TitleBar />
      <TabBar />
      <Ribbon />
      <FormulaBar />
      <main className="flex min-h-0 flex-1">
        <Grid />
        <VScroll />
      </main>
      <SheetBar />
      <StatusBar />
      <div className="h-10 shrink-0 bg-black" />
      <Brand />
    </div>
  );
}
